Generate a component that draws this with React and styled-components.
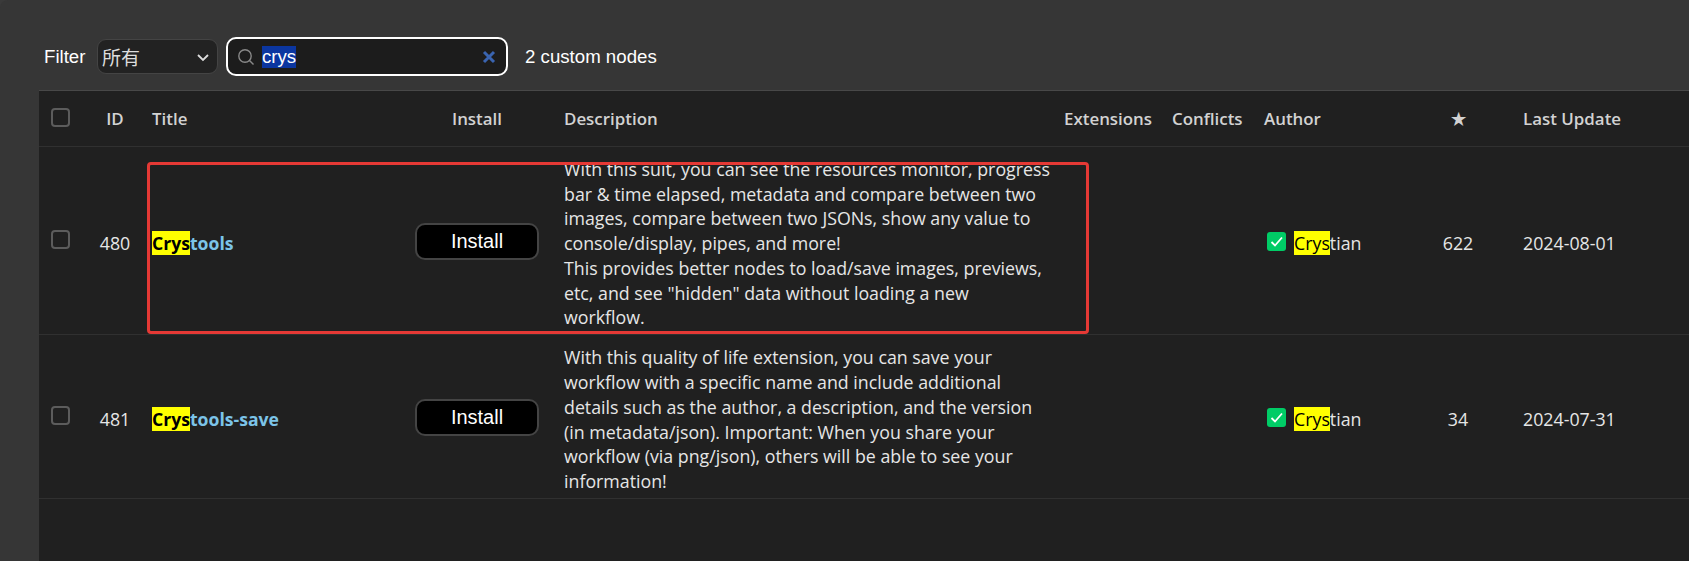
import React from "react";
import styled, { createGlobalStyle } from "styled-components";

const GRID = "51px 50px 267px 140px 505px 108px 92px 158px 96px 1fr";
const CELL_FONT = `"Open Sans", "Noto Sans", sans-serif`;

const Global = createGlobalStyle`
  html, body { margin: 0; padding: 0; background: #3a3a3a; }
`;

const Page = styled.div`
  width: 1689px;
  height: 561px;
  overflow: hidden;
  box-sizing: border-box;
  padding: 37px 0 0 39px;
  background: #363636;
  border-top-left-radius: 8px;
`;

const Toolbar = styled.div`
  display: flex;
  align-items: center;
  height: 39px;
  margin-bottom: 14px;
  margin-left: 5px;
  color: #fff;
  font-family: "Liberation Sans", Arial, sans-serif;
  font-size: 18.67px;
`;

const FilterLabel = styled.span`
  width: 53px;
`;

const Select = styled.div`
  box-sizing: border-box;
  width: 121px;
  height: 35px;
  display: flex;
  align-items: center;
  justify-content: space-between;
  padding: 0 7px 0 4px;
  background: #222;
  border: 1px solid #444;
  border-radius: 9px;
  color: #ddd;
  font-family: "Noto Sans CJK SC", sans-serif;
  font-size: 19px;
  svg { display: block; }
`;

const Search = styled.div`
  box-sizing: border-box;
  width: 282px;
  height: 39px;
  margin-left: 8px;
  display: flex;
  align-items: center;
  padding: 0 10px 0 9px;
  background: #1c1c1c;
  border: 2px solid #fff;
  border-radius: 10px;
  svg { display: block; flex: none; }
`;

const Selected = styled.span`
  margin-left: 7px;
  padding: 1px 0;
  background: #0b36a0;
  color: #fff;
  line-height: 20px;
`;

const Clear = styled.span`
  margin-left: auto;
  display: flex;
`;

const Count = styled.span`
  margin-left: 17px;
`;

const Table = styled.div`
  background: #202020;
  border-top: 1px solid #484848;
  height: 471px;
  font-family: ${CELL_FONT};
  font-size: 17.8px;
  color: #e6e6e6;
`;

const Row = styled.div`
  position: relative;
  display: grid;
  grid-template-columns: ${GRID};
  align-items: center;
  box-sizing: border-box;
  height: ${(p) => p.$height}px;
  border-bottom: 1px solid #303030;
`;

const Head = styled.div`
  padding-left: ${(p) => (p.$center ? 0 : p.$pad || 12)}px;
  text-align: ${(p) => (p.$center ? "center" : "left")};
  font-weight: 600;
  font-size: 16.9px;
  color: #d2d2d2;
  white-space: nowrap;
`;

const Cell = styled.div`
  padding-left: ${(p) => (p.$center ? 0 : p.$pad || 12)}px;
  text-align: ${(p) => (p.$center ? "center" : "left")};
  white-space: nowrap;
  position: relative;
  top: 2px;
`;

const CheckCell = styled.div`
  padding-left: 12px;
  position: relative;
  top: -1px;
`;

const Checkbox = styled.div`
  box-sizing: border-box;
  width: 19px;
  height: 19px;
  border: 2px solid #5c5c5c;
  border-radius: 4px;
`;

const Title = styled.div`
  padding-left: 12px;
  font-weight: 700;
  font-size: 17.6px;
  color: #7cc4e8;
  white-space: nowrap;
  position: relative;
  top: 2px;
`;

const Mark = styled.span`
  background: #ff0;
  color: #000;
  font-weight: ${(p) => (p.$bold ? 700 : 400)};
`;

const InstallCell = styled.div`
  display: flex;
  justify-content: center;
  position: relative;
  top: 1px;
`;

const InstallButton = styled.button`
  box-sizing: border-box;
  width: 124px;
  height: 37px;
  background: #000;
  border: 2px solid #444;
  border-radius: 10px;
  color: #fff;
  font-family: "Liberation Sans", Arial, sans-serif;
  font-size: 20px;
  padding: 0 0 1px;
`;

const Description = styled.div`
  padding-left: 17px;
  width: 487px;
  box-sizing: content-box;
  line-height: 24.8px;
  position: relative;
  top: 3px;
`;

const Author = styled.div`
  display: flex;
  align-items: center;
  gap: 8px;
  padding-left: 15px;
  position: relative;
  top: 2px;
`;

const Badge = styled.span`
  width: 19px;
  height: 19px;
  border-radius: 3px;
  background: #00cc66;
  display: flex;
  align-items: center;
  justify-content: center;
  position: relative;
  top: -1px;
`;

// red annotation drawn over the first row of the screenshot
const Callout = styled.div`
  position: absolute;
  left: 108px;
  top: 15px;
  width: 942px;
  height: 172px;
  box-sizing: border-box;
  border: 3px solid #e53935;
  border-radius: 4px;
  pointer-events: none;
`;

const nodes = [
  {
    id: 480,
    rest: "tools",
    height: 188,
    stars: 622,
    date: "2024-08-01",
    desc: (
      <>
        With this suit, you can see the resources monitor, progress bar & time
        elapsed, metadata and compare between two images, compare between two
        JSONs, show any value to console/display, pipes, and more!
        <br />
        This provides better nodes to load/save images, previews, etc, and see
        "hidden" data without loading a new workflow.
      </>
    ),
  },
  {
    id: 481,
    rest: "tools-save",
    height: 164,
    stars: 34,
    date: "2024-07-31",
    desc: "With this quality of life extension, you can save your workflow with a specific name and include additional details such as the author, a description, and the version (in metadata/json). Important: When you share your workflow (via png/json), others will be able to see your information!",
  },
];

const App = () => {
  return (
    <>
      <Global />
      <Page>
        <Toolbar>
          <FilterLabel>Filter</FilterLabel>
          <Select>
            所有
            <svg width="14" height="14" viewBox="0 0 14 14" fill="none">
              <path d="M2 5l5 5 5-5" stroke="#ddd" strokeWidth="1.8" />
            </svg>
          </Select>
          <Search>
            <svg width="18" height="18" viewBox="0 0 18 18" fill="none">
              <circle cx="8" cy="8" r="6.2" stroke="#888" strokeWidth="1.4" />
              <path d="M12.5 12.5L16.5 16.5" stroke="#888" strokeWidth="1.4" />
            </svg>
            <Selected>crys</Selected>
            <Clear>
              <svg width="14" height="14" viewBox="0 0 14 14" fill="none">
                <path d="M2 2l10 10M12 2L2 12" stroke="#3a64b0" strokeWidth="3" />
              </svg>
            </Clear>
          </Search>
          <Count>2 custom nodes</Count>
        </Toolbar>
        <Table>
          <Row $height={56}>
            <CheckCell>
              <Checkbox />
            </CheckCell>
            <Head $center>ID</Head>
            <Head>Title</Head>
            <Head $center>Install</Head>
            <Head $pad={17}>Description</Head>
            <Head>Extensions</Head>
            <Head>Conflicts</Head>
            <Head>Author</Head>
            <Head $center>★</Head>
            <Head $pad={17}>Last Update</Head>
          </Row>
          {nodes.map((node, i) => (
            <Row key={node.id} $height={node.height}>
              <CheckCell>
                <Checkbox />
              </CheckCell>
              <Cell $center>{node.id}</Cell>
              <Title>
                <Mark $bold>Crys</Mark>
                {node.rest}
              </Title>
              <InstallCell>
                <InstallButton>Install</InstallButton>
              </InstallCell>
              <Description>{node.desc}</Description>
              <Cell />
              <Cell />
              <Author>
                <Badge>
                  <svg width="13" height="13" viewBox="0 0 13 13" fill="none">
                    <path d="M1.5 7l3.5 3.5 7-8" stroke="#fff" strokeWidth="1.8" />
                  </svg>
                </Badge>
                <span>
                  <Mark>Crys</Mark>tian
                </span>
              </Author>
              <Cell $center>{node.stars}</Cell>
              <Cell $pad={17}>{node.date}</Cell>
              {i === 0 && <Callout />}
            </Row>
          ))}
        </Table>
      </Page>
    </>
  );
};

export default App;
